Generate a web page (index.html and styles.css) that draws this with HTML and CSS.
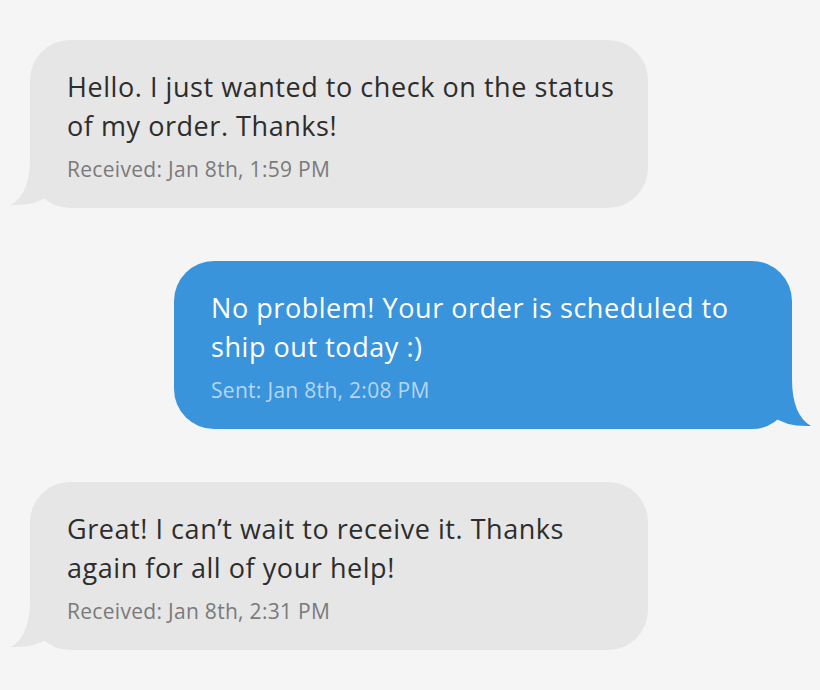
FILE: index.html
```html
<!DOCTYPE html>
<html lang="en">
<head>
<meta charset="utf-8">
<title>Messages</title>
<link rel="stylesheet" href="styles.css">
</head>
<body>
<div class="thread">
  <div class="bubble received">
    <svg class="tail" viewBox="0 0 70 70" width="70" height="70"><path d="M20 8 L20 20 Q20 56 1 67 Q26 68 40 57 Q52 68 66 70 L66 8 Z"/></svg>
    <p class="msg">Hello. I just wanted to check on the status<br>of my order. Thanks!</p>
    <p class="meta">Received: Jan 8th, 1:59 PM</p>
  </div>
  <div class="bubble sent">
    <svg class="tail" viewBox="0 0 70 70" width="70" height="70"><path d="M50 8 L50 20 Q50 56 69 67 Q44 68 30 57 Q18 68 4 70 L4 8 Z"/></svg>
    <p class="msg">No problem! Your order is scheduled to<br>ship out today :)</p>
    <p class="meta">Sent: Jan 8th, 2:08 PM</p>
  </div>
  <div class="bubble received">
    <svg class="tail" viewBox="0 0 70 70" width="70" height="70"><path d="M20 8 L20 20 Q20 56 1 67 Q26 68 40 57 Q52 68 66 70 L66 8 Z"/></svg>
    <p class="msg">Great! I can’t wait to receive it. Thanks<br>again for all of your help!</p>
    <p class="meta">Received: Jan 8th, 2:31 PM</p>
  </div>
</div>
</body>
</html>
```
FILE: styles.css
```css
html, body {
  margin: 0;
  padding: 0;
  background: #f5f5f5;
}
body {
  width: 820px;
  height: 690px;
  overflow: hidden;
  font-family: "Open Sans", "Liberation Sans", sans-serif;
}
.thread {
  display: flex;
  flex-direction: column;
  gap: 53px;
  padding-top: 40px;
}
.bubble {
  position: relative;
  width: 618px;
  box-sizing: border-box;
  height: 168px;
  padding: 27px 10px 0 37px;
  border-radius: 40px;
}
.received {
  margin-left: 30px;
  background: #e6e6e6;
  color: #2d2d2d;
}
.sent {
  margin-left: 174px;
  background: #3a94db;
  color: #ffffff;
}
.msg,
.meta {
  position: relative;
  margin: 0;
  white-space: nowrap;
}
.msg {
  font-size: 27px;
  line-height: 39px;
  letter-spacing: 0.55px;
}
.meta {
  margin-top: 11px;
  font-size: 21px;
  line-height: 26px;
  letter-spacing: 0.3px;
}
.received .meta { color: #7a7a7a; }
.sent .meta { color: #b5d6f2; }
.tail {
  position: absolute;
  bottom: 0;
  display: block;
}
.received .tail {
  left: -20px;
  fill: #e6e6e6;
}
.sent .tail {
  right: -20px;
  fill: #3a94db;
}
```
